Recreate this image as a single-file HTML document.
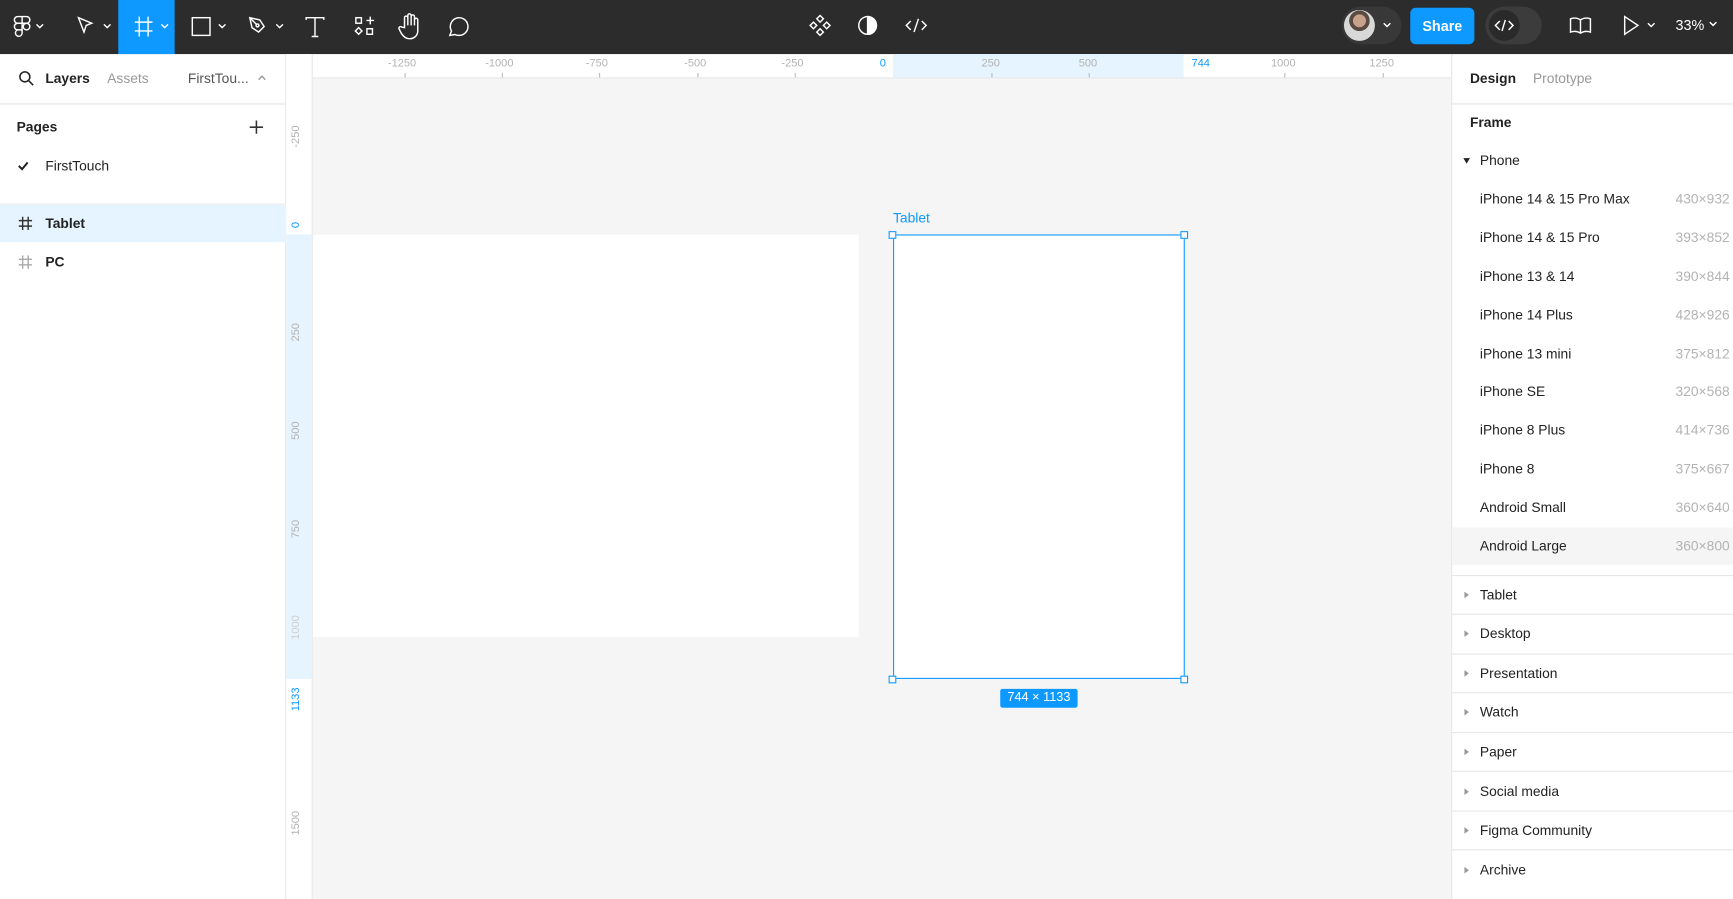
<!DOCTYPE html>
<html><head><meta charset="utf-8"><style>
*{margin:0;padding:0;box-sizing:border-box}
body{width:1733px;height:899px;overflow:hidden;background:#fff;font-family:"Liberation Sans",sans-serif}
#w{position:absolute;left:0;top:0;width:1568px;height:813px;transform:scale(1.10523,1.10578);transform-origin:0 0}
.a{position:absolute}
.top{left:0;top:0;width:1568px;height:49px;background:#2c2c2c}
svg.i{position:absolute;fill:none;stroke:#fff;stroke-width:1.3}
.t{position:absolute;font-size:12.5px;color:#222;white-space:nowrap;line-height:14px}
.g{color:#999}
.b{font-weight:bold}
.rl{position:absolute;font-size:10px;color:#b3b3b3;line-height:11px}
.vr{transform:rotate(-90deg);transform-origin:center}
.hl{position:absolute;height:1px;background:#e6e6e6}
.dim{position:absolute;right:3px;font-size:12.5px;color:#b3b3b3;line-height:14px}
.tri{position:absolute;left:1325px;width:0;height:0;border-top:3px solid transparent;border-bottom:3px solid transparent;border-left:4px solid #999}
.h{position:absolute;width:7px;height:7px;background:#fff;border:1px solid #0d99ff}
</style></head><body><div id="w">
<div class="a top"></div>
<div class="a" style="left:107px;top:0;width:51px;height:49px;background:#0d99ff"></div>
<!-- figma logo -->
<svg class="i" style="left:12px;top:14px" width="32" height="20" viewBox="0 0 32 20"><path d="M4 1h4v6H4a3 3 0 010-6zM8 1h4a3 3 0 010 6H8zM4 7h4v6H4a3 3 0 010-6zM4 13h4v3a3 3 0 11-4-3z"/><circle cx="12" cy="10" r="3"/><path d="M21 8l3 3 3-3"/></svg>
<svg class="i" style="left:68px;top:14px" width="36" height="20" viewBox="0 0 36 20"><path d="M3 2l12 5-5 2-2 6z"/><path d="M26 8l3 3 3-3"/></svg>
<svg class="i" style="left:120px;top:13px" width="36" height="22" viewBox="0 0 36 22"><path d="M6 2v18M14 2v18M2 7h16M2 15h16"/><path d="M26 9l3 3 3-3"/></svg>
<svg class="i" style="left:172px;top:13px" width="36" height="22" viewBox="0 0 36 22"><rect x="2" y="3" width="16" height="16"/><path d="M26 9l3 3 3-3"/></svg>
<svg class="i" style="left:224px;top:13px" width="36" height="22" viewBox="0 0 36 22"><path d="M2 3l9 2 4 6-5 5-6-4zM2 3l6 6"/><circle cx="9" cy="10" r="1.3"/><path d="M26 9l3 3 3-3"/></svg>
<svg class="i" style="left:275px;top:13px" width="20" height="22" viewBox="0 0 20 22"><path d="M2 5V3h16v2M10 3v17M7 20h6"/></svg>
<svg class="i" style="left:319px;top:13px" width="22" height="22" viewBox="0 0 22 22"><rect x="3" y="3" width="5" height="5"/><path d="M16 2v7M12.5 5.5h7"/><path d="M5.5 12l3 3-3 3-3-3z"/><rect x="13" y="13" width="5" height="5"/></svg>
<svg class="i" style="left:360px;top:11px" width="24" height="26" viewBox="0 0 24 26"><path d="M6 14V5a1.5 1.5 0 013 0v7V3a1.5 1.5 0 013 0v9V4a1.5 1.5 0 013 0v8V7a1.5 1.5 0 013 0v10a7 7 0 01-7 7h-1c-3 0-5-2-7-5l-2-4a1.5 1.5 0 012.5-1.5z"/></svg>
<svg class="i" style="left:403px;top:12px" width="24" height="24" viewBox="0 0 24 24"><path d="M4 20l1.5-4A8 8 0 1112 20a8 8 0 01-3.5-.8z"/></svg>
<!-- center -->
<svg class="i" style="left:731px;top:12px" width="22" height="22" viewBox="0 0 22 22"><path d="M11 2l3 3-3 3-3-3zM11 14l3 3-3 3-3-3zM5 8l3 3-3 3-3-3zM17 8l3 3-3 3-3-3z"/></svg>
<svg class="i" style="left:775px;top:13px" width="20" height="20" viewBox="0 0 20 20"><circle cx="10" cy="10" r="8"/><path d="M10 2a8 8 0 010 16z" fill="#fff"/></svg>
<svg class="i" style="left:818px;top:14px" width="22" height="18" viewBox="0 0 22 18"><path d="M6 5L2 9l4 4M16 5l4 4-4 4M13 3l-4 12"/></svg>
<!-- right -->
<div class="a" style="left:1214px;top:6px;width:54px;height:34px;border-radius:17px;background:#383838"></div>
<div class="a" style="left:1216px;top:9px;width:28px;height:28px;border-radius:50%;background:radial-gradient(circle at 50% 35%,#c9a08a 0 25%,#5a4a44 26% 40%,#d8d8d8 41%)"></div>
<svg class="i" style="left:1250px;top:18px" width="12" height="10" viewBox="0 0 12 10"><path d="M2 3l3 3 3-3"/></svg>
<div class="a" style="left:1276px;top:7px;width:58px;height:33px;border-radius:5px;background:#0d99ff;color:#fff;font-size:13px;font-weight:bold;text-align:center;line-height:33px">Share</div>
<div class="a" style="left:1344px;top:6px;width:51px;height:34px;border-radius:17px;background:#3c3c3c"></div>
<div class="a" style="left:1347px;top:9px;width:28px;height:28px;border-radius:50%;background:#2a2a2a"></div>
<svg class="i" style="left:1351px;top:15px" width="20" height="16" viewBox="0 0 20 16"><path d="M6 4L2 8l4 4M14 4l4 4-4 4M11 3l-3 10"/></svg>
<svg class="i" style="left:1419px;top:14px" width="22" height="18" viewBox="0 0 22 18"><path d="M11 4C8 2 5 2 2 3v12c3-1 6-1 9 1 3-2 6-2 9-1V3c-3-1-6-1-9 1zM11 4v12"/></svg>
<svg class="i" style="left:1466px;top:13px" width="36" height="20" viewBox="0 0 36 20"><path d="M4 2l12 8-12 8z"/><path d="M25 8l3 3 3-3"/></svg>
<div class="t" style="left:1516px;top:16px;color:#fff;font-size:13px">33%</div>
<svg class="i" style="left:1545px;top:17px" width="12" height="10" viewBox="0 0 12 10"><path d="M2 3l3 3 3-3"/></svg>

<!-- left panel -->
<div class="a" style="left:0;top:49px;width:259px;height:764px;background:#fff;border-right:1px solid #e6e6e6"></div>
<svg class="i" style="left:16px;top:63px;stroke:#222;stroke-width:1.4" width="16" height="16" viewBox="0 0 16 16"><circle cx="6.5" cy="6.5" r="4.5"/><path d="M10 10l4 4"/></svg>
<div class="t b" style="left:41px;top:64px">Layers</div>
<div class="t g" style="left:97px;top:64px">Assets</div>
<div class="t" style="left:170px;top:64px;color:#555">FirstTou...</div>
<svg class="i" style="left:231px;top:66px;stroke:#999" width="12" height="10" viewBox="0 0 12 10"><path d="M3 6l3-3 3 3"/></svg>
<div class="hl" style="left:0;top:93px;width:259px;height:2px;background:#f0f0f0"></div>
<div class="t b" style="left:15px;top:108px">Pages</div>
<svg class="i" style="left:224px;top:107px;stroke:#333;stroke-width:1.4" width="16" height="16" viewBox="0 0 16 16"><path d="M8 2v12M2 8h12"/></svg>
<svg class="i" style="left:15px;top:144px;stroke:#222;stroke-width:1.8" width="12" height="12" viewBox="0 0 12 12"><path d="M2 6l3 3 5-6"/></svg>
<div class="t" style="left:41px;top:143px">FirstTouch</div>
<div class="hl" style="left:0;top:184px;width:259px;height:1px;background:#eee"></div>
<div class="a" style="left:0;top:185px;width:259px;height:34px;background:#e5f4ff"></div>
<svg class="i" style="left:16px;top:195px;stroke:#333;stroke-width:1.3" width="14" height="14" viewBox="0 0 14 14"><path d="M4.5 1v12M9.5 1v12M1 4.5h12M1 9.5h12"/></svg>
<div class="t b" style="left:41px;top:195px">Tablet</div>
<svg class="i" style="left:16px;top:230px;stroke:#aaa;stroke-width:1.3" width="14" height="14" viewBox="0 0 14 14"><path d="M4.5 1v12M9.5 1v12M1 4.5h12M1 9.5h12"/></svg>
<div class="t b" style="left:41px;top:230px">PC</div>

<!-- canvas -->
<div class="a" style="left:283px;top:71px;width:1030px;height:742px;background:#f5f5f5"></div>
<div class="a" style="left:283px;top:212px;width:494px;height:364px;background:#fff"></div>
<!-- rulers -->
<div class="a" style="left:259px;top:49px;width:1054px;height:22px;background:#fff;border-bottom:1px solid #e6e6e6"></div>
<div class="a" style="left:808px;top:49px;width:263px;height:21px;background:#e5f4ff"></div>
<div class="a" style="left:259px;top:49px;width:24px;height:764px;background:#fff;border-right:1px solid #e6e6e6"></div>
<div class="a" style="left:259px;top:212px;width:23px;height:402px;background:#e5f4ff"></div>
<div class="rl" style="left:351px;top:52px">-1250</div>
<div class="rl" style="left:439px;top:52px">-1000</div>
<div class="rl" style="left:530px;top:52px">-750</div>
<div class="rl" style="left:619px;top:52px">-500</div>
<div class="rl" style="left:707px;top:52px">-250</div>
<div class="rl" style="left:796px;top:52px;color:#0d99ff">0</div>
<div class="rl" style="left:888px;top:52px">250</div>
<div class="rl" style="left:976px;top:52px">500</div>
<div class="rl" style="left:1078px;top:52px;color:#0d99ff">744</div>
<div class="rl" style="left:1150px;top:52px">1000</div>
<div class="rl" style="left:1239px;top:52px">1250</div>
<div class="a" style="left:366px;top:66px;width:1px;height:4px;background:#bbb"></div>
<div class="a" style="left:454px;top:66px;width:1px;height:4px;background:#bbb"></div>
<div class="a" style="left:542px;top:66px;width:1px;height:4px;background:#bbb"></div>
<div class="a" style="left:631px;top:66px;width:1px;height:4px;background:#bbb"></div>
<div class="a" style="left:719px;top:66px;width:1px;height:4px;background:#bbb"></div>
<div class="a" style="left:897px;top:66px;width:1px;height:4px;background:#bbb"></div>
<div class="a" style="left:985px;top:66px;width:1px;height:4px;background:#bbb"></div>
<div class="a" style="left:1162px;top:66px;width:1px;height:4px;background:#bbb"></div>
<div class="a" style="left:1251px;top:66px;width:1px;height:4px;background:#bbb"></div>
<div class="rl vr" style="left:253px;top:118px;width:30px;text-align:center">-250</div>
<div class="rl vr" style="left:253px;top:198px;width:30px;text-align:center;color:#0d99ff">0</div>
<div class="rl vr" style="left:253px;top:295px;width:30px;text-align:center">250</div>
<div class="rl vr" style="left:253px;top:384px;width:30px;text-align:center">500</div>
<div class="rl vr" style="left:253px;top:473px;width:30px;text-align:center">750</div>
<div class="rl vr" style="left:253px;top:562px;width:30px;text-align:center;color:#d0d0d0">1000</div>
<div class="rl vr" style="left:253px;top:627px;width:30px;text-align:center;color:#0d99ff">1133</div>
<div class="rl vr" style="left:253px;top:739px;width:30px;text-align:center">1500</div>
<!-- frame -->
<div class="t" style="left:808px;top:190px;color:#0d99ff;font-size:12.5px">Tablet</div>
<div class="a" style="left:808px;top:212px;width:264px;height:402px;background:#fff;border:1.5px solid #0d99ff"></div>
<div class="h" style="left:804px;top:209px"></div>
<div class="h" style="left:1068px;top:209px"></div>
<div class="h" style="left:804px;top:611px"></div>
<div class="h" style="left:1068px;top:611px"></div>
<div class="a" style="left:905px;top:623px;width:70px;height:17px;background:#0d99ff;border-radius:2px;color:#fff;font-size:11.5px;text-align:center;line-height:17px">744 × 1133</div>

<!-- right panel -->
<div class="a" style="left:1313px;top:49px;width:255px;height:764px;background:#fff;border-left:1px solid #e6e6e6"></div>
<div class="t b" style="left:1330px;top:64px">Design</div>
<div class="t g" style="left:1387px;top:64px">Prototype</div>
<div class="hl" style="left:1314px;top:93px;width:254px;height:2px;background:#f0f0f0"></div>
<div class="t b" style="left:1330px;top:104px">Frame</div>
<div class="a" style="left:1324px;top:143px;width:0;height:0;border-left:3.5px solid transparent;border-right:3.5px solid transparent;border-top:5px solid #222"></div>
<div class="t" style="left:1339px;top:138px">Phone</div>
<div class="a" style="left:1314px;top:477px;width:254px;height:34px;background:#f5f5f5"></div>
<div class="a" style="left:1314px;top:0;width:254px;height:0"></div>
<div style="position:absolute;left:1314px;top:0;width:254px">
<div class="t" style="left:25px;top:173px">iPhone 14 &amp; 15 Pro Max</div><div class="dim" style="top:173px">430×932</div>
<div class="t" style="left:25px;top:208px">iPhone 14 &amp; 15 Pro</div><div class="dim" style="top:208px">393×852</div>
<div class="t" style="left:25px;top:243px">iPhone 13 &amp; 14</div><div class="dim" style="top:243px">390×844</div>
<div class="t" style="left:25px;top:278px">iPhone 14 Plus</div><div class="dim" style="top:278px">428×926</div>
<div class="t" style="left:25px;top:313px">iPhone 13 mini</div><div class="dim" style="top:313px">375×812</div>
<div class="t" style="left:25px;top:347px">iPhone SE</div><div class="dim" style="top:347px">320×568</div>
<div class="t" style="left:25px;top:382px">iPhone 8 Plus</div><div class="dim" style="top:382px">414×736</div>
<div class="t" style="left:25px;top:417px">iPhone 8</div><div class="dim" style="top:417px">375×667</div>
<div class="t" style="left:25px;top:452px">Android Small</div><div class="dim" style="top:452px">360×640</div>
<div class="t" style="left:25px;top:487px">Android Large</div><div class="dim" style="top:487px">360×800</div>
<div class="hl" style="left:0;top:520px;width:254px"></div>
<div class="t" style="left:25px;top:531px">Tablet</div><div class="hl" style="left:0;top:555px;width:254px"></div>
<div class="t" style="left:25px;top:566px">Desktop</div><div class="hl" style="left:0;top:591px;width:254px"></div>
<div class="t" style="left:25px;top:602px">Presentation</div><div class="hl" style="left:0;top:626px;width:254px"></div>
<div class="t" style="left:25px;top:637px">Watch</div><div class="hl" style="left:0;top:662px;width:254px"></div>
<div class="t" style="left:25px;top:673px">Paper</div><div class="hl" style="left:0;top:697px;width:254px"></div>
<div class="t" style="left:25px;top:709px">Social media</div><div class="hl" style="left:0;top:733px;width:254px"></div>
<div class="t" style="left:25px;top:744px">Figma Community</div><div class="hl" style="left:0;top:768px;width:254px"></div>
<div class="t" style="left:25px;top:780px">Archive</div>
</div>
<div class="tri" style="top:535px"></div>
<div class="tri" style="top:570px"></div>
<div class="tri" style="top:606px"></div>
<div class="tri" style="top:641px"></div>
<div class="tri" style="top:677px"></div>
<div class="tri" style="top:713px"></div>
<div class="tri" style="top:748px"></div>
<div class="tri" style="top:784px"></div>
</div></body></html>
